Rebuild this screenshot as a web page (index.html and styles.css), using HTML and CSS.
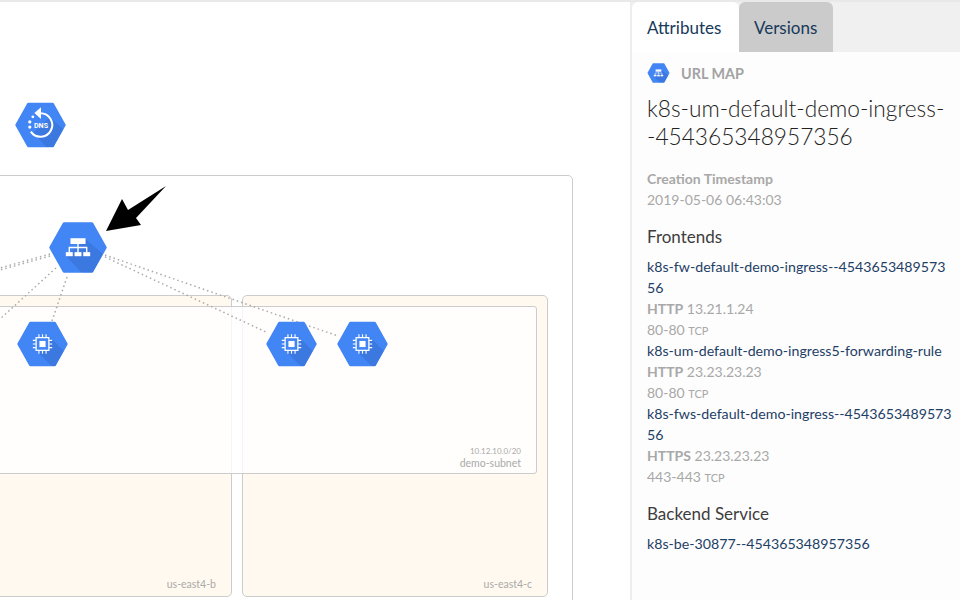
FILE: index.html
```html
<!DOCTYPE html>
<html lang="en">
<head>
    <meta charset="UTF-8">
    <title>URL Map</title>
    <link rel="stylesheet" href="styles.css">
</head>
<body>

    <svg class="defs" width="0" height="0">
        <defs>
            <clipPath id="hex-clip">
                <polygon points="1,45 25,2 75,2 99,45 75,88 25,88" />
            </clipPath>
            <g id="hex-base">
                <polygon points="3,45 26,4 74,4 97,45 74,86 26,86" fill="#4285f4" stroke="#4285f4" stroke-width="5" stroke-linejoin="round" />
            </g>
            <symbol id="icon-vm" viewBox="0 0 100 90">
                <use href="#hex-base" />
                <polygon points="38,58 63,30 105,72 105,95 75,95" fill="#3b78e0" clip-path="url(#hex-clip)" />
                <rect x="37.5" y="32.5" width="25" height="25" fill="#4285f4" stroke="#fff" stroke-width="2.5" />
                <rect x="44" y="39" width="12" height="12" fill="#fff" />
                <path d="M43 26v6M50 26v6M57 26v6M43 58v6M50 58v6M57 58v6M31 38h6M31 45h6M31 52h6M63 38h6M63 45h6M63 52h6" stroke="#fff" stroke-width="2.2" fill="none" />
            </symbol>
            <symbol id="icon-map" viewBox="0 0 100 90">
                <use href="#hex-base" />
                <polygon points="30,60 62,30 105,66 105,95 62,95" fill="#3b78e0" clip-path="url(#hex-clip)" />
                <rect x="37" y="29" width="26" height="10" fill="#fff" />
                <path d="M50 39v6M35 53v-8h30v8M50 45v8" stroke="#fff" stroke-width="2.4" fill="none" />
                <rect x="29" y="53" width="12" height="7" fill="#fff" />
                <rect x="44" y="53" width="12" height="7" fill="#fff" />
                <rect x="59" y="53" width="12" height="7" fill="#fff" />
            </symbol>
            <symbol id="icon-dns" viewBox="0 0 100 90">
                <use href="#hex-base" />
                <polygon points="36,60 68,30 105,62 105,95 68,95" fill="#3b78e0" clip-path="url(#hex-clip)" />
                <path d="M50 22 A23 23 0 1 1 31 58" fill="none" stroke="#fff" stroke-width="4" />
                <polygon points="51,10 51,33 38,21.5" fill="#fff" />
                <circle cx="35" cy="29" r="2.8" fill="#fff" />
                <circle cx="29" cy="39" r="3.2" fill="#fff" />
                <circle cx="29" cy="49" r="3.2" fill="#fff" />
                <text x="51" y="51" class="dns-label">DNS</text>
            </symbol>
        </defs>
    </svg>

    <main class="canvas">
        <div class="frame vpc"></div>
        <div class="frame zone zone-b"><span class="zone-name">us-east4-b</span></div>
        <div class="frame zone zone-c"><span class="zone-name">us-east4-c</span></div>
        <div class="frame subnet">
            <span class="subnet-cidr">10.12.10.0/20</span>
            <span class="subnet-name">demo-subnet</span>
        </div>

        <svg class="links" width="631" height="600">
            <g stroke="#aaa" stroke-width="1.5" stroke-dasharray="1.5 3" fill="none">
                <path d="M50 254L0 268" />
                <path d="M50 256L0 270" />
                <path d="M56 268L0 319" />
                <path d="M67 277L52 321" />
                <path d="M105 257L268 333" />
                <path d="M105 255L338 336" />
            </g>
            <polygon points="106,231 122,199 128,210 166,186 136,218 141,225" fill="#000" />
        </svg>

        <svg class="node node-dns"><use href="#icon-dns" /></svg>
        <svg class="node node-map"><use href="#icon-map" /></svg>
        <svg class="node node-vm1"><use href="#icon-vm" /></svg>
        <svg class="node node-vm2"><use href="#icon-vm" /></svg>
        <svg class="node node-vm3"><use href="#icon-vm" /></svg>
    </main>

    <aside class="sidebar">
        <nav class="tabs">
            <div class="tab active">Attributes</div>
            <div class="tab">Versions</div>
        </nav>
        <div class="panel">
            <div class="kind">
                <svg class="kind-icon"><use href="#icon-map" /></svg>
                <span>URL MAP</span>
            </div>
            <h1 class="title">k8s-um-default-demo-ingress--454365348957356</h1>

            <div class="attr-label">Creation Timestamp</div>
            <div class="muted">2019-05-06 06:43:03</div>

            <h2 class="section">Frontends</h2>
            <a class="link">k8s-fw-default-demo-ingress--454365348957356</a>
            <div class="muted"><b>HTTP</b> 13.21.1.24</div>
            <div class="muted">80-80 <small>TCP</small></div>
            <a class="link">k8s-um-default-demo-ingress5-forwarding-rule</a>
            <div class="muted"><b>HTTP</b> 23.23.23.23</div>
            <div class="muted">80-80 <small>TCP</small></div>
            <a class="link">k8s-fws-default-demo-ingress--454365348957356</a>
            <div class="muted"><b>HTTPS</b> 23.23.23.23</div>
            <div class="muted">443-443 <small>TCP</small></div>

            <h2 class="section">Backend Service</h2>
            <a class="link">k8s-be-30877--454365348957356</a>
        </div>
    </aside>

</body>
</html>
```

FILE: styles.css
```css
/* === base === */
html, body {
    height: 100%;
    margin: 0;
    overflow: hidden;
}

body {
    display: flex;
    background: #fff;
    font-family: "Lato", "Liberation Sans", sans-serif;
    border-top: 2px solid #e9e9e9;
    box-sizing: border-box;
}

.defs {
    position: absolute;
}

.dns-label {
    font-family: "Roboto", sans-serif;
    font-size: 14px;
    font-weight: 700;
    fill: #fff;
    text-anchor: middle;
}

/* === diagram === */
.canvas {
    position: relative;
    flex: 1;
    overflow: hidden;
}

.frame {
    position: absolute;
    box-sizing: border-box;
    border: 1px solid #ccc;
    border-radius: 5px;
}

.vpc {
    left: -20px;
    top: 173px;
    width: 593px;
    height: 460px;
}

.zone {
    top: 293px;
    height: 302px;
    background: #fff9ef;
}

.zone-b {
    left: -20px;
    width: 252px;
}

.zone-c {
    left: 242px;
    width: 306px;
}

.zone-name {
    position: absolute;
    right: 15px;
    bottom: 6px;
    font-size: 10.5px;
    color: #aaa;
}

.subnet {
    left: -20px;
    top: 304px;
    width: 557px;
    height: 168px;
    background: rgba(255, 255, 255, 0.8);
    border-radius: 0 3px 3px 0;
    text-align: right;
    display: flex;
    flex-direction: column;
    justify-content: flex-end;
    padding: 0 15px 4px 0;
    color: #aaa;
}

.subnet-cidr {
    font-size: 8px;
    line-height: 11px;
}

.subnet-name {
    font-size: 10.5px;
    line-height: 12px;
}

.links {
    position: absolute;
    left: 0;
    top: -2px;
}

.node {
    position: absolute;
    width: 51px;
    height: 46px;
}

.node-dns { left: 15px; top: 100px; }
.node-map { left: 49px; top: 219px; width: 58px; height: 53px; }
.node-vm1 { left: 17px; top: 319px; }
.node-vm2 { left: 266px; top: 319px; }
.node-vm3 { left: 337px; top: 319px; }

/* === sidebar === */
.sidebar {
    width: 330px;
    box-sizing: border-box;
    border-left: 2px solid #eee;
    background: #fdfdfd;
}

.tabs {
    display: flex;
    height: 50px;
    background: #f0f0f0;
}

.tab {
    padding: 15px 20px 0 15px;
    box-sizing: border-box;
    width: 94px;
    background: #cbcbcb;
    border-radius: 6px 6px 0 0;
    font-size: 17px;
    color: #17395a;
}

.tab.active {
    width: 107px;
    background: #fff;
}

.panel {
    padding: 11px 7px 0 15px;
    font-size: 14px;
    line-height: 21px;
}

.kind {
    display: flex;
    align-items: center;
    gap: 11px;
    height: 20px;
    font-size: 14.4px;
    font-weight: 700;
    color: #a3a3a3;
}

.kind-icon {
    width: 23px;
    height: 20px;
}

.title {
    margin: 12px 0 0;
    font-size: 22.7px;
    line-height: 28px;
    font-weight: 300;
    color: #222;
}

.attr-label {
    margin-top: 17px;
    font-weight: 700;
    color: #a8a8a8;
}

.muted {
    color: #a8a8a8;
}

.muted small {
    font-size: 11px;
    line-height: 0;
}

.section {
    margin: 15px 0 7px;
    font-size: 17px;
    line-height: 24px;
    font-weight: 400;
    color: #3d3d3d;
}

.link {
    display: block;
    font-size: 14.2px;
    color: #1d4066;
    word-break: break-all;
}
```
